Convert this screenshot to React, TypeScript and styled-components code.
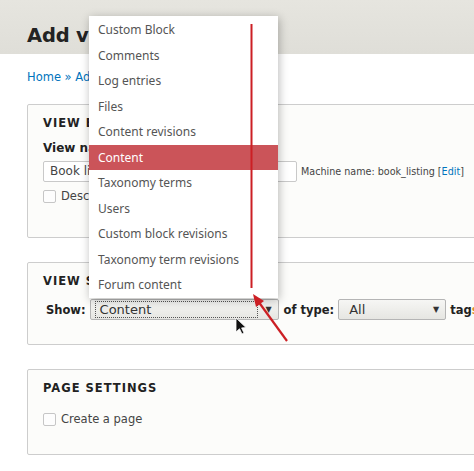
import React from "react";
import styled, { createGlobalStyle } from "styled-components";

const GlobalStyle = createGlobalStyle`
  html, body {
    margin: 0;
    padding: 0;
    background: #ffffff;
  }
  body {
    font-family: "DejaVu Sans", Verdana, sans-serif;
    color: #333333;
  }
`;

const menuItems = [
  "Custom Block",
  "Comments",
  "Log entries",
  "Files",
  "Content revisions",
  "Content",
  "Taxonomy terms",
  "Users",
  "Custom block revisions",
  "Taxonomy term revisions",
  "Forum content",
];

const Page = styled.div`
  position: relative;
  width: 474px;
  height: 471px;
  overflow: hidden;
  background: #ffffff;
`;

const Header = styled.header`
  height: 54px;
  background: linear-gradient(#e6e5df, #dfded8);
  display: flex;
  align-items: center;
  padding: 17px 0 0 27px;
  box-sizing: border-box;
`;

const Title = styled.h1`
  margin: 0;
  font-size: 19.5px;
  font-weight: bold;
  letter-spacing: -0.2px;
  color: #232323;
`;

const Content = styled.div`
  padding: 14px 0 0 27px;
  display: flex;
  flex-direction: column;
`;

const Breadcrumb = styled.div`
  font-size: 11.5px;
  color: #0074bd;
  height: 18px;
  line-height: 18px;
`;

const Fieldset = styled.section<{ $height: number; $gap: number }>`
  box-sizing: border-box;
  width: 520px;
  height: ${(p) => p.$height}px;
  margin-top: ${(p) => p.$gap}px;
  border: 1px solid #cdcdcd;
  border-radius: 2px;
  background: #fcfcfa;
  padding: 10px 15px 0 15px;
  display: flex;
  flex-direction: column;
`;

const Legend = styled.div`
  font-size: 11.5px;
  font-weight: bold;
  text-transform: uppercase;
  letter-spacing: 1px;
  color: #222222;
  line-height: 16px;
`;

const Label = styled.div`
  margin-top: 9px;
  font-size: 12px;
  font-weight: bold;
  color: #222222;
  line-height: 16px;
`;

const Row = styled.div<{ $top: number }>`
  display: flex;
  align-items: center;
  margin-top: ${(p) => p.$top}px;
  gap: 4px;
`;

const TextInput = styled.div`
  box-sizing: border-box;
  width: 254px;
  height: 21px;
  border: 1px solid #c9c9c9;
  border-radius: 2px;
  background: #ffffff;
  font-size: 12px;
  line-height: 19px;
  padding-left: 6px;
  color: #444444;
`;

const Small = styled.span`
  font-size: 9.6px;
  color: #444444;
`;

const LinkText = styled.span`
  color: #0074bd;
`;

const Checkbox = styled.span`
  box-sizing: border-box;
  width: 13px;
  height: 13px;
  border: 1px solid #c6c6c6;
  border-radius: 2px;
  background: #fdfdfd;
  margin-right: 1px;
`;

const CheckLabel = styled.span`
  font-size: 11.5px;
  color: #444444;
`;

const InlineLabel = styled.span<{ $pad?: number }>`
  font-size: 11.5px;
  font-weight: bold;
  color: #222222;
  padding-left: ${(p) => p.$pad ?? 0}px;
`;

const Select = styled.div<{ $width: number }>`
  box-sizing: border-box;
  width: ${(p) => p.$width}px;
  height: 21px;
  border: 1px solid #b5b5b5;
  border-radius: 2px;
  background: linear-gradient(#f6f6f4, #e6e6e2);
  display: flex;
  align-items: center;
  padding: 0 6px 0 4px;
  font-size: 13px;
  color: #333333;
`;

const SelectValue = styled.span<{ $focused?: boolean }>`
  flex: 1;
  height: 15px;
  line-height: 15px;
  padding-left: ${(p) => (p.$focused ? 4 : 5)}px;
  margin-right: 7px;
  border: 1px dotted ${(p) => (p.$focused ? "#555" : "transparent")};
`;

const Caret = styled.span`
  font-size: 8px;
  color: #333333;
`;

const Orange = styled.span`
  color: #e08a2c;
`;

const Menu = styled.ul`
  position: absolute;
  left: 89px;
  top: 16px;
  width: 189px;
  margin: 0;
  padding: 1px 0 0 0;
  list-style: none;
  background: #ffffff;
  box-shadow: 1px 2px 9px rgba(0, 0, 0, 0.28);
  font-family: "Noto Sans", "Open Sans", sans-serif;
`;

const MenuItem = styled.li<{ $active?: boolean }>`
  height: 25.5px;
  line-height: 25.5px;
  padding-left: 9px;
  font-size: 12px;
  color: ${(p) => (p.$active ? "#ffffff" : "#555555")};
  background: ${(p) => (p.$active ? "#cb5459" : "transparent")};
`;

const Overlay = styled.svg`
  position: absolute;
  left: 0;
  top: 0;
  pointer-events: none;
`;

export default function App() {
  return (
    <>
      <GlobalStyle />
      <Page>
        <Header>
          <Title>Add view</Title>
        </Header>
        <Content>
          <Breadcrumb>Home » Administration</Breadcrumb>
          <Fieldset $height={134} $gap={18}>
            <Legend>View basic information</Legend>
            <Label>View name</Label>
            <Row $top={5}>
              <TextInput>Book listing</TextInput>
              <Small>
                Machine name: book_listing [<LinkText>Edit</LinkText>]
              </Small>
            </Row>
            <Row $top={7}>
              <Checkbox />
              <CheckLabel>Description</CheckLabel>
            </Row>
          </Fieldset>
          <Fieldset $height={83} $gap={24}>
            <Legend>View settings</Legend>
            <Row $top={10}>
              <InlineLabel $pad={3}>Show:</InlineLabel>
              <Select $width={189}>
                <SelectValue $focused>Content</SelectValue>
                <Caret>▼</Caret>
              </Select>
              <InlineLabel $pad={1}>of type:</InlineLabel>
              <Select $width={108}>
                <SelectValue>All</SelectValue>
                <Caret>▼</Caret>
              </Select>
              <InlineLabel>
                tag<Orange>s</Orange>
              </InlineLabel>
            </Row>
          </Fieldset>
          <Fieldset $height={86} $gap={24}>
            <Legend>Page settings</Legend>
            <Row $top={16}>
              <Checkbox />
              <CheckLabel>Create a page</CheckLabel>
            </Row>
          </Fieldset>
        </Content>

        <Menu>
          {menuItems.map((item) => (
            <MenuItem key={item} $active={item === "Content"}>
              {item}
            </MenuItem>
          ))}
        </Menu>

        <Overlay width="474" height="471" viewBox="0 0 474 471">
          <line x1="251.5" y1="24" x2="251.5" y2="288" stroke="#cc1f24" strokeWidth="2" />
          <line x1="287" y1="341" x2="258" y2="301" stroke="#cc1f24" strokeWidth="2.2" />
          <polygon points="253,294 256,307 264,301" fill="#cc1f24" />
          <path
            d="M236 318 L236 332 L239.5 328.8 L242 334 L244 333 L241.6 327.9 L246 327.6 Z"
            fill="#111"
            stroke="#fff"
            strokeWidth="0.8"
          />
        </Overlay>
      </Page>
    </>
  );
}
